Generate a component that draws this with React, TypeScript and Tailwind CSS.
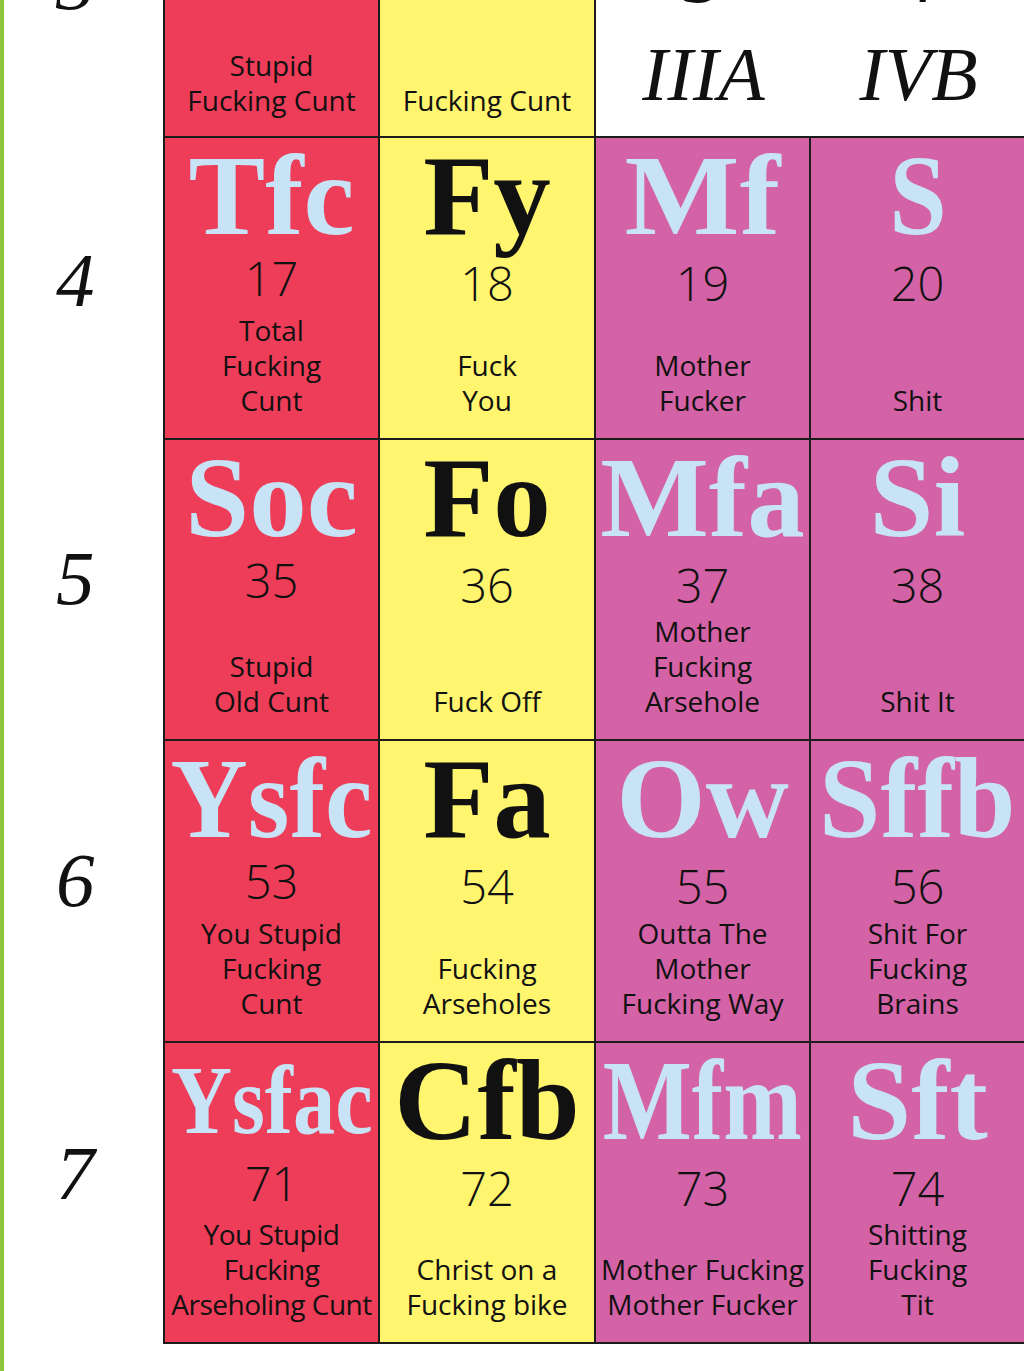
import React from "react";

type Cell = {
    sym: string;
    num: number;
    name: string[];
    color: "red" | "yellow" | "pink";
    symClass?: string;
    nameClass?: string;
};

const bg = {
    red: "bg-[#ee3d58]",
    yellow: "bg-[#fff56f]",
    pink: "bg-[#d462a6]",
};

const rows: { label: string; labelPad: string; height: string; cells: Cell[] }[] = [
    {
        label: "4",
        labelPad: "pt-[104px]",
        height: "h-[302px]",
        cells: [
            { sym: "Tfc", num: 17, name: ["Total", "Fucking", "Cunt"], color: "red" },
            { sym: "Fy", num: 18, name: ["Fuck", "You"], color: "yellow" },
            { sym: "Mf", num: 19, name: ["Mother", "Fucker"], color: "pink", symClass: "scale-x-[1.06]" },
            { sym: "S", num: 20, name: ["Shit"], color: "pink", symClass: "scale-x-[0.9]" },
        ],
    },
    {
        label: "5",
        labelPad: "pt-[100px]",
        height: "h-[301px]",
        cells: [
            { sym: "Soc", num: 35, name: ["Stupid", "Old Cunt"], color: "red" },
            { sym: "Fo", num: 36, name: ["Fuck Off"], color: "yellow" },
            { sym: "Mfa", num: 37, name: ["Mother", "Fucking", "Arsehole"], color: "pink" },
            { sym: "Si", num: 38, name: ["Shit It"], color: "pink" },
        ],
    },
    {
        label: "6",
        labelPad: "pt-[101px]",
        height: "h-[302px]",
        cells: [
            { sym: "Ysfc", num: 53, name: ["You Stupid", "Fucking", "Cunt"], color: "red", symClass: "scale-x-[0.93]" },
            { sym: "Fa", num: 54, name: ["Fucking", "Arseholes"], color: "yellow" },
            { sym: "Ow", num: 55, name: ["Outta The", "Mother", "Fucking Way"], color: "pink" },
            { sym: "Sffb", num: 56, name: ["Shit For", "Fucking", "Brains"], color: "pink", symClass: "scale-x-[0.96]" },
        ],
    },
    {
        label: "7",
        labelPad: "pt-[92px]",
        height: "h-[301px]",
        cells: [
            {
                sym: "Ysfac",
                num: 71,
                name: ["You Stupid", "Fucking", "Arseholing Cunt"],
                color: "red",
                symClass: "scale-x-[0.87] text-[97px]",
                nameClass: "tracking-[-0.5px]",
            },
            { sym: "Cfb", num: 72, name: ["Christ on a", "Fucking bike"], color: "yellow" },
            { sym: "Mfm", num: 73, name: ["Mother Fucking", "Mother Fucker"], color: "pink", symClass: "scale-x-[0.82]" },
            { sym: "Sft", num: 74, name: ["Shitting", "Fucking", "Tit"], color: "pink" },
        ],
    },
];

const colWidths = ["w-[217px] border-l-2", "w-[216px]", "w-[215px]", "w-[215px]"];

const serif = "font-['Liberation_Serif',serif]";
const sans = "font-['Open_Sans',sans-serif]";

function Element({ cell, col }: { cell: Cell; col: number }) {
    return (
        <div
            className={`${colWidths[col]} ${bg[cell.color]} h-full shrink-0 border-r-2 border-b-2 border-[#1c1c1c] flex flex-col items-center overflow-visible`}
        >
            <div
                className={`h-[115px] leading-[115px] font-bold whitespace-nowrap ${serif} ${
                    cell.color === "yellow" ? "text-[#111111]" : "text-[#c7e3f5]"
                } ${cell.symClass ?? ""} ${cell.symClass?.includes("text-[") ? "" : "text-[115px]"}`}
            >
                {cell.sym}
            </div>
            <div
                className={`${col === 0 ? "mt-[2px]" : "mt-[7px]"} text-[47px] leading-none font-light text-[#111111] ${sans}`}
            >
                {cell.num}
            </div>
            <div
                className={`mt-auto pb-[20px] text-[28px] leading-[35px] font-normal text-center whitespace-nowrap text-[#111111] ${sans} ${cell.nameClass ?? ""}`}
            >
                {cell.name.map((line) => (
                    <div key={line}>{line}</div>
                ))}
            </div>
        </div>
    );
}

export default function App() {
    return (
        <div className="w-[1024px] h-[1371px] bg-white overflow-hidden flex border-l-4 border-[#8cc63f]">
            {/* row labels */}
            <div className="w-[159px] shrink-0 flex flex-col">
                <div className="h-[138px] overflow-hidden pl-[52px]">
                    <div className={`-mt-[55px] text-[77px] leading-none italic text-[#111111] ${serif}`}>3</div>
                </div>
                {rows.map((row) => (
                    <div key={row.label} className={`${row.height} ${row.labelPad} pl-[52px]`}>
                        <div className={`text-[77px] leading-none italic text-[#111111] ${serif}`}>
                            {row.label}
                        </div>
                    </div>
                ))}
            </div>

            {/* table */}
            <div className="flex flex-col">
                <div className="h-[138px] flex">
                    <div
                        className={`w-[217px] border-l-2 border-r-2 border-b-2 border-[#1c1c1c] ${bg.red} flex flex-col items-center justify-end pb-[18px] text-[28px] leading-[35px] font-normal text-center text-[#111111] ${sans}`}
                    >
                        <div>Stupid</div>
                        <div>Fucking Cunt</div>
                    </div>
                    <div
                        className={`w-[216px] border-r-2 border-b-2 border-[#1c1c1c] ${bg.yellow} flex flex-col items-center justify-end pb-[18px] text-[28px] leading-[35px] font-normal text-center text-[#111111] ${sans}`}
                    >
                        <div>Fucking Cunt</div>
                    </div>
                    <div className="w-[215px] border-b-2 border-[#1c1c1c] bg-white flex flex-col items-center overflow-hidden">
                        <div className={`-mt-[62px] h-[62px] text-[77px] leading-none italic text-[#111111] ${serif}`}>3</div>
                        <div className={`pt-[36px] text-[76px] leading-none italic text-[#111111] ${serif}`}>IIIA</div>
                    </div>
                    <div className="w-[215px] border-b-2 border-[#1c1c1c] bg-white flex flex-col items-center overflow-hidden">
                        <div className={`-mt-[62px] h-[62px] text-[77px] leading-none italic text-[#111111] ${serif}`}>4</div>
                        <div className={`pt-[36px] text-[76px] leading-none italic text-[#111111] ${serif}`}>IVB</div>
                    </div>
                </div>
                {rows.map((row) => (
                    <div key={row.label} className={`${row.height} flex`}>
                        {row.cells.map((cell, i) => (
                            <Element key={cell.sym} cell={cell} col={i} />
                        ))}
                    </div>
                ))}
            </div>
        </div>
    );
}
